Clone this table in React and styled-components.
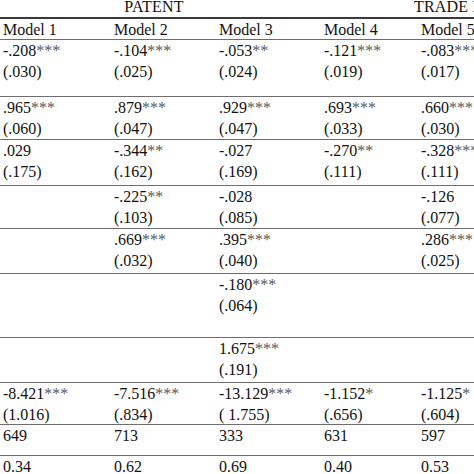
import React from "react";
import styled, { createGlobalStyle } from "styled-components";

const GlobalStyle = createGlobalStyle`
  html, body {
    margin: 0;
    padding: 0;
    background: #fff;
  }
  body {
    width: 474px;
    height: 474px;
    overflow: hidden;
    font-family: "Liberation Serif", "Times New Roman", serif;
    color: #111;
  }
`;

const cols = "106px 105px 105px 97px 1fr";

const rows = [
  {
    h: 57,
    cells: [
      ["-.208***", "(.030)"],
      ["-.104***", "(.025)"],
      ["-.053**", "(.024)"],
      ["-.121***", "(.019)"],
      ["-.083***", "(.017)"],
    ],
  },
  {
    h: 43,
    cells: [
      [".965***", "(.060)"],
      [".879***", "(.047)"],
      [".929***", "(.047)"],
      [".693***", "(.033)"],
      [".660***", "(.030)"],
    ],
  },
  {
    h: 46,
    cells: [
      [".029", "(.175)"],
      ["-.344**", "(.162)"],
      ["-.027", "(.169)"],
      ["-.270**", "(.111)"],
      ["-.328***", "(.111)"],
    ],
  },
  {
    h: 43,
    cells: [[], ["-.225**", "(.103)"], ["-.028", "(.085)"], [], ["-.126", "(.077)"]],
  },
  {
    h: 45,
    cells: [[], [".669***", "(.032)"], [".395***", "(.040)"], [], [".286***", "(.025)"]],
  },
  {
    h: 64,
    cells: [[], [], ["-.180***", "(.064)"], [], []],
  },
  {
    h: 45,
    cells: [[], [], ["1.675***", "(.191)"], [], []],
  },
  {
    h: 42,
    cells: [
      ["-8.421***", "(1.016)"],
      ["-7.516***", "(.834)"],
      ["-13.129***", "( 1.755)"],
      ["-1.152*", "(.656)"],
      ["-1.125*", "(.604)"],
    ],
  },
  {
    h: 31,
    cells: [["649"], ["713"], ["333"], ["631"], ["597"]],
  },
  {
    h: 30,
    cells: [["0.34"], ["0.62"], ["0.69"], ["0.40"], ["0.53"]],
  },
];

const Table = styled.div`
  width: 474px;
  font-size: 16px;
  white-space: nowrap;
`;

const TitleRow = styled.div`
  display: grid;
  grid-template-columns: ${cols};
  height: 17px;
  line-height: 13px;
  letter-spacing: 0.2px;
`;

const Group = styled.div`
  grid-column: ${(p) => p.$span};
  text-align: ${(p) => p.$align};
  padding-left: ${(p) => p.$pl || 0}px;
  padding-right: ${(p) => p.$pr || 0}px;
  overflow: hidden;
`;

const Row = styled.div`
  display: grid;
  grid-template-columns: ${cols};
  box-sizing: border-box;
  height: ${(p) => p.$h}px;
  border-top: ${(p) => (p.$heavy ? "2px solid #3a3a3a" : "1px solid #6e6e6e")};
  line-height: 21px;
`;

const Cell = styled.div`
  padding-left: ${(p) => (p.$first ? 3 : 8)}px;
  overflow: hidden;
  display: flex;
  flex-direction: column;
`;

const Stars = styled.span`
  color: #5a5a5a;
`;

const Value = ({ text }) => {
  const m = text.match(/^(.*?)(\*+)$/);
  if (!m) return <span>{text}</span>;
  return (
    <span>
      {m[1]}
      <Stars>{m[2]}</Stars>
    </span>
  );
};

export default function App() {
  return (
    <>
      <GlobalStyle />
      <Table>
        <TitleRow>
          <Group $span="1 / 4" $align="center" $pr={8}>
            PATENT
          </Group>
          <Group $span="4 / 6" $align="left" $pl={98}>
            TRADE MARK
          </Group>
        </TitleRow>
        <Row $h={22} $heavy>
          {["Model 1", "Model 2", "Model 3", "Model 4", "Model 5"].map((t, i) => (
            <Cell key={t} $first={i === 0}>
              <span>{t}</span>
            </Cell>
          ))}
        </Row>
        {rows.map((r, ri) => (
          <Row key={ri} $h={r.h}>
            {r.cells.map((lines, ci) => (
              <Cell key={ci} $first={ci === 0}>
                {lines.map((l, li) => (
                  <Value key={li} text={l} />
                ))}
              </Cell>
            ))}
          </Row>
        ))}
      </Table>
    </>
  );
}
